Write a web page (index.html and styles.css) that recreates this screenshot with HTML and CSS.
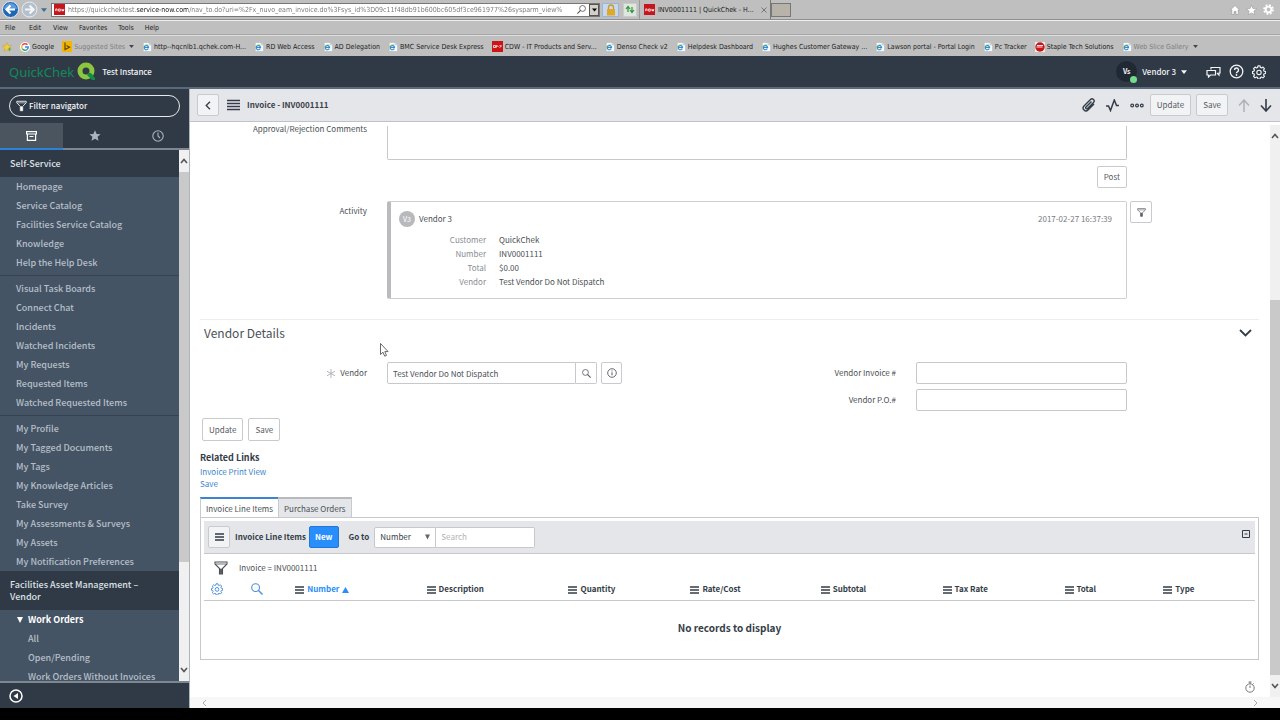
FILE: index.html
```html
<!DOCTYPE html>
<html lang="en">
<head>
<meta charset="utf-8">
<title>INV0001111 | QuickChek</title>
<link rel="stylesheet" href="styles.css">
</head>
<body>
<svg class="defs" aria-hidden="true">
  <symbol id="ie" viewBox="0 0 12 12"><path d="M1.500 .5h7l3 3v8h-10z" fill="#f8fbff" stroke="#a9b3be" stroke-width=".7"/><path d="M8.500 .5v3h3" fill="#dce5ee" stroke="#a9b3be" stroke-width=".6"/><path d="M7.600 7.900A2.600 2.600 0 1 1 7.900 6.500H3" fill="none" stroke="#2f8fd0" stroke-width="1.400"/><path d="M.6 8.500C.3 5.500 4 2.500 7.600 3.200" fill="none" stroke="#d8c83c" stroke-width=".8"/></symbol>
  <symbol id="gear" viewBox="0 0 16 16"><path d="M6.800 1h2.400l.4 1.900 1.300.5 1.600-1 1.700 1.700-1 1.600.5 1.300 1.900.4v2.300l-1.900.4-.5 1.300 1 1.600-1.700 1.700-1.600-1-1.300.5-.4 1.900H6.800l-.4-1.900-1.300-.5-1.600 1-1.700-1.700 1-1.600-.5-1.300L.6 9.700V7.400l1.700-.4.5-1.300-1-1.600 1.700-1.700 1.600 1 1.300-.5z" fill="none" stroke="currentColor" stroke-width="1.300" stroke-linejoin="round"/><circle cx="8" cy="8.500" r="2.500" fill="none" stroke="currentColor" stroke-width="1.300"/></symbol>
  <symbol id="funnel" viewBox="0 0 14 14"><path d="M1 1h12v2L8.500 7.500V13h-3V7.500L1 3z" fill="none" stroke="currentColor" stroke-width="1.100"/><path d="M2 3h10M6.200 8v4.500h1.600V8z" fill="currentColor" stroke="currentColor" stroke-width=".8"/></symbol>
  <symbol id="bars" viewBox="0 0 9 8"><path d="M0 1h9M0 4h9M0 7h9" stroke="currentColor" stroke-width="1.300"/></symbol>
  <symbol id="search" viewBox="0 0 12 12"><circle cx="4.600" cy="4.600" r="3.900" fill="none" stroke="currentColor" stroke-width="1.100"/><path d="M7.300 7.300l4.200 4.200" stroke="currentColor" stroke-width="1.400"/></symbol>
  <symbol id="up" viewBox="0 0 8 6"><path d="M1 5l3-3.500L7 5" fill="none" stroke="currentColor" stroke-width="1.600"/></symbol>
  <symbol id="down" viewBox="0 0 8 6"><path d="M1 1l3 3.500L7 1" fill="none" stroke="currentColor" stroke-width="1.600"/></symbol>
  <symbol id="caret" viewBox="0 0 8 5"><path d="M0 0h8L4 5z" fill="currentColor"/></symbol>
  <symbol id="wedge" viewBox="0 0 6 6"><path d="M0 0h6L3 6z" fill="currentColor"/></symbol>
  <symbol id="now" viewBox="0 0 10 10"><path d="M0 0h10v10H0z" fill="#c4161c"/><path d="M1.500 6.500v-2h1.300v2M4.200 4.500h1.500v2H4.200zM7 4.500l.5 2 .5-1.500.5 1.500.5-2" fill="none" stroke="#fff" stroke-width=".7"/></symbol>
</svg>

<header class="browser">
  <div class="address-row">
    <button class="round" aria-label="Back"><svg width="17" height="17" viewBox="0 0 17 17"><circle cx="8.500" cy="8.500" r="8" fill="#1f66b5" stroke="#e8eef5"/><path d="M2 8a6.500 6 0 0 1 13 0z" fill="#5b9adb"/><path d="M13 8.500H5M8.500 4.500l-4 4 4 4" fill="none" stroke="#fff" stroke-width="2.200"/></svg></button>
    <button class="round" aria-label="Forward"><svg width="17" height="17" viewBox="0 0 17 17"><circle cx="8.500" cy="8.500" r="7.500" fill="#b4bfcc" stroke="#e9eef4"/><path d="M4 8.500h8M8.500 4.500l4 4-4 4" fill="none" stroke="#f4f7fa" stroke-width="2.200"/></svg></button>
    <svg class="history" width="6" height="4"><use href="#caret"/></svg>
    <div class="address">
      <svg width="11" height="11"><use href="#now"/></svg>
      <input class="url" aria-label="Address" value="https://quickchektest.service-now.com/nav_to.do?uri=%2Fx_nuvo_eam_invoice.do%3Fsys_id%3D09c11f48db91b600bc605df3ce961977%26sysparm_view%">
      <svg class="flip" width="9" height="9"><use href="#search"/></svg>
      <button class="drop" aria-label="Show addresses"><svg width="5" height="4"><use href="#caret"/></svg></button>
    </div>
    <button class="chip chip-lock" aria-label="Security report"><svg width="10" height="12" viewBox="0 0 10 12"><path d="M2.500 5V3.500a2.500 2.500 0 0 1 5 0V5" fill="none" stroke="#c89a2c" stroke-width="1.300"/><rect x="1" y="5" width="8" height="6.500" fill="#dfa827"/></svg></button>
    <button class="chip chip-fresh" aria-label="Refresh"><svg width="10" height="9" viewBox="0 0 10 9"><path d="M3 7V2M1 4l2-2.500L5 4M7 2v5M5 5l2 2.500L9 5" fill="none" stroke="#2c9434" stroke-width="1.200"/></svg></button>
    <div class="page-tab"><svg width="11" height="11"><use href="#now"/></svg><span>INV0001111 | QuickChek - H...</span><button class="plain" aria-label="Close tab"><svg width="6" height="6" viewBox="0 0 6 6"><path d="M.5.5l5 5M5.500.5l-5 5" stroke="#777"/></svg></button></div>
    <button class="new-tab" aria-label="New tab"></button>
    <div class="browser-tools">
      <button class="plain" aria-label="Home"><svg width="10" height="10" viewBox="0 0 10 10"><path d="M5 .5L.5 5h1.300v4.500h2.200V6.500h2v3h2.200V5h1.300z" fill="#fff" stroke="#888" stroke-width=".5"/></svg></button>
      <button class="plain" aria-label="Favorites"><svg width="11" height="10" viewBox="0 0 12 11"><path d="M6 .3l1.600 3.600 4 .3-3 2.600.9 3.900L6 8.700l-3.500 2 .9-3.900-3-2.600 4-.3z" fill="#fff" stroke="#888" stroke-width=".5"/></svg></button>
      <button class="plain white" aria-label="Tools"><svg width="11" height="11" viewBox="0 0 12 12"><circle cx="6" cy="6" r="4.800" fill="none" stroke="#fff" stroke-width="2" stroke-dasharray="2 1.770"/><circle cx="6" cy="6" r="3.100" fill="none" stroke="#fff" stroke-width="2"/></svg></button>
    </div>
  </div>
  <nav class="menu-row" aria-label="Browser menu"><button>File</button><button>Edit</button><button>View</button><button>Favorites</button><button>Tools</button><button>Help</button></nav>
  <nav class="bookmarks" aria-label="Bookmarks">
    <svg width="10" height="10" viewBox="0 0 12 11"><path d="M6 .3l1.600 3.600 4 .3-3 2.600.9 3.900L6 8.700l-3.500 2 .9-3.900-3-2.600 4-.3z" fill="#f3cf3b" stroke="#c49a1b" stroke-width=".5"/><path d="M7 8h4M9 6v4" stroke="#48a548"/></svg>
    <a href="#"><svg width="10" height="10" viewBox="0 0 10 10"><circle cx="5" cy="5" r="5" fill="#fff"/><path d="M7.500 2.800A3.300 3.300 0 0 0 2.200 3.300" stroke="#ea4335" stroke-width="1.400" fill="none"/><path d="M2.200 3.300a3.300 3.300 0 0 0 0 3.400" stroke="#fbbc05" stroke-width="1.400" fill="none"/><path d="M2.200 6.700a3.300 3.300 0 0 0 4.900.8" stroke="#34a853" stroke-width="1.400" fill="none"/><path d="M7.100 7.500A3.300 3.300 0 0 0 8.300 5H5" stroke="#4285f4" stroke-width="1.400" fill="none"/></svg>Google</a>
    <a href="#" class="dim"><svg width="10" height="11" viewBox="0 0 10 11"><path d="M0 0h10v11H0z" fill="#f4b400"/><path d="M3 1.500v7l4.500-2.300L4.500 4.500" fill="none" stroke="#5c4708" stroke-width="1.200"/></svg>Suggested Sites <svg class="tiny" width="5" height="3"><use href="#caret"/></svg></a>
    <a href="#"><svg width="10" height="10"><use href="#ie"/></svg>http--hqcnlb1.qchek.com-H...</a>
    <a href="#"><svg width="10" height="10"><use href="#ie"/></svg>RD Web Access</a>
    <a href="#"><svg width="10" height="10"><use href="#ie"/></svg>AD Delegation</a>
    <a href="#"><svg width="10" height="10"><use href="#ie"/></svg>BMC Service Desk Express</a>
    <a href="#"><svg width="11" height="11" viewBox="0 0 11 11"><path d="M0 0h11v11H0z" fill="#cc1417"/><path d="M1.500 4.500h2v2h-2zM4.500 6.500v-2l2 1M7.500 4.500l2 .5-2 1.500" fill="none" stroke="#fff" stroke-width=".8"/></svg>CDW - IT Products and Serv...</a>
    <a href="#"><svg width="10" height="10"><use href="#ie"/></svg>Denso Check v2</a>
    <a href="#"><svg width="10" height="10"><use href="#ie"/></svg>Helpdesk Dashboard</a>
    <a href="#"><svg width="10" height="10"><use href="#ie"/></svg>Hughes Customer Gateway ...</a>
    <a href="#"><svg width="10" height="10"><use href="#ie"/></svg>Lawson portal - Portal Login</a>
    <a href="#"><svg width="10" height="10"><use href="#ie"/></svg>Pc Tracker</a>
    <a href="#"><svg width="10" height="10" viewBox="0 0 10 10"><path d="M0 0h10v10H0z" fill="#f3e9e9"/><circle cx="5" cy="5" r="4.700" fill="#c9151b"/><path d="M2 3.500h6M1.500 5h6" stroke="#fff" stroke-width=".9"/></svg>Staple Tech Solutions</a>
    <a href="#" class="dim"><svg width="10" height="10"><use href="#ie"/></svg>Web Slice Gallery <svg class="tiny" width="5" height="3"><use href="#caret"/></svg></a>
  </nav>
</header>

<header class="banner">
  <span class="brand">QuickChek</span>
  <svg width="19" height="19" viewBox="0 0 19 19"><circle cx="9" cy="9" r="6" fill="none" stroke="#8cc63f" stroke-width="5"/><path d="M11 11h3l4 5v2h-3l-5-5z" fill="#128a4a"/></svg>
  <span class="instance">Test Instance</span>
  <button class="user"><span class="avatar">Vs<i class="presence"></i></span>Vendor 3<svg width="6" height="4"><use href="#caret"/></svg></button>
  <button class="plain tool" aria-label="Conversations"><svg width="15" height="12" viewBox="0 0 15 12"><path d="M5 3.500V1.500h9V7h-1v2l-2-2" fill="none" stroke="currentColor" stroke-width="1.200"/><path d="M1 4.500h8.500V9H4.500l-2 2V9H1z" fill="none" stroke="currentColor" stroke-width="1.200"/></svg></button>
  <button class="plain tool" aria-label="Help"><svg width="15" height="15" viewBox="0 0 15 15"><circle cx="7.500" cy="7.500" r="6.300" fill="none" stroke="currentColor" stroke-width="1.300"/><path d="M5.500 6a2 2 0 1 1 2.900 1.800c-.7.400-.9.700-.9 1.400" fill="none" stroke="currentColor" stroke-width="1.400"/><circle cx="7.500" cy="11" r=".9" fill="currentColor"/></svg></button>
  <button class="plain tool" aria-label="Settings"><svg width="14" height="14"><use href="#gear"/></svg></button>
</header>

<div class="shell">
  <aside class="sidebar">
    <label class="filter"><svg width="11" height="12"><use href="#funnel"/></svg><input aria-label="Filter navigator" placeholder="Filter navigator"></label>
    <div class="nav-tabs">
      <button class="on" aria-label="All applications"><svg width="11" height="10" viewBox="0 0 11 10"><path d="M.6.600h9.800v2.400H.6zM1.400 3v6.300h8.200V3M3.500 5.500h4" fill="none" stroke="currentColor" stroke-width="1.200"/></svg></button>
      <button aria-label="Favorites"><svg width="12" height="11" viewBox="0 0 12 11"><path d="M6 .3l1.600 3.600 4 .3-3 2.600.9 3.900L6 8.700l-3.500 2 .9-3.900-3-2.600 4-.3z" fill="currentColor"/></svg></button>
      <button aria-label="History"><svg width="12" height="12" viewBox="0 0 12 12"><circle cx="6" cy="6" r="5.200" fill="none" stroke="currentColor" stroke-width="1.100"/><path d="M6 2.500V6l2 2" fill="none" stroke="currentColor" stroke-width="1.100"/></svg></button>
    </div>
    <div class="nav-body">
      <nav class="nav-list" aria-label="Applications">
        <h2>Self-Service</h2>
        <ul><li><a href="#">Homepage</a></li><li><a href="#">Service Catalog</a></li><li><a href="#">Facilities Service Catalog</a></li><li><a href="#">Knowledge</a></li><li><a href="#">Help the Help Desk</a></li></ul>
        <ul><li><a href="#">Visual Task Boards</a></li><li><a href="#">Connect Chat</a></li><li><a href="#">Incidents</a></li><li><a href="#">Watched Incidents</a></li><li><a href="#">My Requests</a></li><li><a href="#">Requested Items</a></li><li><a href="#">Watched Requested Items</a></li></ul>
        <ul><li><a href="#">My Profile</a></li><li><a href="#">My Tagged Documents</a></li><li><a href="#">My Tags</a></li><li><a href="#">My Knowledge Articles</a></li><li><a href="#">Take Survey</a></li><li><a href="#">My Assessments &amp; Surveys</a></li><li><a href="#">My Assets</a></li><li><a href="#">My Notification Preferences</a></li></ul>
        <h2>Facilities Asset Management – Vendor</h2>
        <button class="nav-group"><svg width="6" height="6"><use href="#wedge"/></svg>Work Orders</button>
        <ul class="sub"><li><a href="#">All</a></li><li><a href="#">Open/Pending</a></li><li><a href="#">Work Orders Without Invoices</a></li></ul>
      </nav>
      <div class="vbar side-bar"><button aria-label="Scroll up"><svg width="8" height="6"><use href="#up"/></svg></button><i class="thumb"></i><i class="rest"></i><button aria-label="Scroll down"><svg width="8" height="6"><use href="#down"/></svg></button></div>
    </div>
    <div class="side-foot"><button class="plain" aria-label="Collapse navigator"><svg width="14" height="14" viewBox="0 0 14 14"><circle cx="7" cy="7" r="6" fill="none" stroke="#fff" stroke-width="1.500"/><path d="M9 4v6L4.500 7z" fill="#fff"/></svg></button></div>
  </aside>

  <main class="main">
    <div class="form-bar">
      <button class="btn icon" aria-label="Back"><svg width="6" height="9" viewBox="0 0 6 9"><path d="M5 .7L1.200 4.500 5 8.300" fill="none" stroke="currentColor" stroke-width="1.300"/></svg></button>
      <button class="plain dark" aria-label="Form menu"><svg width="13" height="12" viewBox="0 0 13 12"><path d="M0 1.500h13M0 4.500h13M0 7.500h13M0 10.500h13" stroke="currentColor" stroke-width="1.500"/></svg></button>
      <h1>Invoice - INV0001111</h1>
      <div class="form-tools">
        <button class="plain dark" aria-label="Attachments"><svg width="14" height="14" viewBox="0 0 14 14"><path d="M9.500 3.500L4 9a1 1 0 0 0 1.500 1.500l6-6a2 2 0 0 0-3-3L2 8a2.800 2.800 0 0 0 4 4l6-6" fill="none" stroke="currentColor" stroke-width="1.400"/></svg></button>
        <button class="plain dark" aria-label="Activity"><svg width="14" height="13" viewBox="0 0 14 13"><path d="M0 7h2.500l2 4.500L8.300 1l2.200 5.500H13" fill="none" stroke="currentColor" stroke-width="1.500"/></svg></button>
        <button class="plain dark" aria-label="More"><svg width="14" height="5" viewBox="0 0 14 5"><g fill="none" stroke="currentColor" stroke-width="1.200"><circle cx="2.200" cy="2.500" r="1.400"/><circle cx="7" cy="2.500" r="1.400"/><circle cx="11.800" cy="2.500" r="1.400"/></g></svg></button>
        <div class="pair"><button class="btn">Update</button><button class="btn">Save</button></div>
        <button class="plain faint" aria-label="Previous record"><svg width="12" height="13" viewBox="0 0 12 13"><path d="M6 13V1M1 6.500L6 1l5 5.500" fill="none" stroke="currentColor" stroke-width="1.500"/></svg></button>
        <button class="plain dark" aria-label="Next record"><svg width="12" height="13" viewBox="0 0 12 13"><path d="M6 0v12M1 6.500L6 12l5-5.500" fill="none" stroke="currentColor" stroke-width="1.600"/></svg></button>
      </div>
    </div>
    <div class="view">
      <div class="content">
        <div class="row comments"><label for="comments">Approval/Rejection Comments</label><textarea id="comments"></textarea></div>
        <div class="row post"><button class="btn">Post</button></div>
        <section class="row activity">
          <span class="caption">Activity</span>
          <article class="card">
            <header><span class="badge">V3</span><span>Vendor 3</span><time>2017-02-27 16:37:39</time></header>
            <dl><dt>Customer</dt><dd>QuickChek</dd><dt>Number</dt><dd>INV0001111</dd><dt>Total</dt><dd>$0.00</dd><dt>Vendor</dt><dd>Test Vendor Do Not Dispatch</dd></dl>
          </article>
          <button class="btn icon filter-btn" aria-label="Filter activity"><svg width="9" height="9"><use href="#funnel"/></svg></button>
        </section>
        <div class="section-head"><h2>Vendor Details</h2><button class="plain dark" aria-label="Collapse section"><svg width="13" height="8" viewBox="0 0 13 8"><path d="M1 1l5.500 5.500L12 1" fill="none" stroke="currentColor" stroke-width="1.800"/></svg></button></div>
        <div class="fields">
          <label for="vendor"><svg width="8" height="9" viewBox="0 0 8 9"><path d="M4 0v9M0 2.200l8 4.600M8 2.200L0 6.800" stroke="#aaadb2" stroke-width=".9"/></svg>Vendor</label>
          <div class="lookup"><input id="vendor" value="Test Vendor Do Not Dispatch"><button class="btn icon joined" aria-label="Look up vendor"><svg width="9" height="9"><use href="#search"/></svg></button><button class="btn icon" aria-label="Vendor info"><svg width="10" height="10" viewBox="0 0 10 10"><circle cx="5" cy="5" r="4.300" fill="none" stroke="currentColor" stroke-width=".9"/><path d="M5 4.300v3M5 2.400v1" stroke="currentColor"/></svg></button></div>
          <label for="vinv">Vendor Invoice #</label><input id="vinv">
          <label class="third" for="vpo">Vendor P.O.#</label><input id="vpo">
        </div>
        <div class="actions"><button class="btn">Update</button><button class="btn">Save</button></div>
        <section class="links"><h3>Related Links</h3><a href="#">Invoice Print View</a><a href="#">Save</a></section>
        <div class="tabs" role="tablist"><button role="tab" aria-selected="true">Invoice Line Items</button><button role="tab" aria-selected="false">Purchase Orders</button></div>
        <section class="panel">
          <div class="list-bar">
            <button class="btn icon" aria-label="List menu"><svg width="9" height="8"><use href="#bars"/></svg></button>
            <h3>Invoice Line Items</h3>
            <button class="btn primary">New</button>
            <label for="goto">Go to</label>
            <div class="goto"><span class="select"><select id="goto"><option>Number</option></select><svg width="5" height="6"><use href="#wedge"/></svg></span><input aria-label="Search" placeholder="Search"></div>
            <button class="plain collapse" aria-label="Collapse list"><svg width="8" height="8" viewBox="0 0 8 8"><path d="M.5.500h7v7h-7zM2.500 4h3" fill="none" stroke="currentColor"/></svg></button>
          </div>
          <div class="crumb"><svg width="14" height="14"><use href="#funnel"/></svg><a href="#">Invoice = INV0001111</a></div>
          <table>
            <colgroup><col class="c-gear"><col class="c-find"><col class="c-number"><col class="c-desc"><col class="c-std"><col class="c-rate"><col class="c-std"><col class="c-std"><col class="c-total"><col></colgroup>
            <thead><tr>
              <th class="tool-cell"><button class="plain blue" aria-label="Personalize list"><svg width="12" height="12"><use href="#gear"/></svg></button></th>
              <th class="tool-cell"><button class="plain blue" aria-label="Search columns"><svg width="12" height="12"><use href="#search"/></svg></button></th>
              <th><svg width="9" height="8"><use href="#bars"/></svg><a class="sorted" href="#">Number</a> <svg class="sort" width="7" height="6" viewBox="0 0 7 6"><path d="M3.500 0L7 6H0z" fill="#278efc"/></svg></th>
              <th><svg width="9" height="8"><use href="#bars"/></svg>Description</th>
              <th><svg width="9" height="8"><use href="#bars"/></svg>Quantity</th>
              <th><svg width="9" height="8"><use href="#bars"/></svg>Rate/Cost</th>
              <th><svg width="9" height="8"><use href="#bars"/></svg>Subtotal</th>
              <th><svg width="9" height="8"><use href="#bars"/></svg>Tax Rate</th>
              <th><svg width="9" height="8"><use href="#bars"/></svg>Total</th>
              <th><svg width="9" height="8"><use href="#bars"/></svg>Type</th>
            </tr></thead>
            <tbody><tr><td colspan="10">No records to display</td></tr></tbody>
          </table>
        </section>
        <div class="timer"><button class="plain" aria-label="Response time"><svg width="10" height="12" viewBox="0 0 10 12"><circle cx="5" cy="7" r="4.200" fill="none" stroke="currentColor"/><path d="M5 4.500V7M3.500 1h3M5 1v2M8.500 2.500l-1 1" stroke="currentColor"/></svg></button></div>
      </div>
      <div class="vbar main-bar"><button aria-label="Scroll up"><svg width="8" height="6"><use href="#up"/></svg></button><i class="rest"></i><i class="thumb"></i><button aria-label="Scroll down"><svg width="8" height="6"><use href="#down"/></svg></button></div>
    </div>
    <div class="hbar"><button class="plain" aria-label="Scroll left"><svg width="5" height="8" viewBox="0 0 5 8"><path d="M4 1L1 4l3 3" fill="none" stroke="#aaa"/></svg></button><button class="plain" aria-label="Scroll right"><svg width="5" height="8" viewBox="0 0 5 8"><path d="M1 1l3 3-3 3" fill="none" stroke="#aaa"/></svg></button></div>
  </main>
</div>
<svg class="pointer" width="9" height="14" viewBox="0 0 9 14" aria-hidden="true"><path d="M.5.500v11l2.500-2.300 1.700 4 1.800-.8-1.700-3.800h3.300z" fill="#fff" stroke="#444" stroke-width=".8"/></svg>
</body>
</html>
```
FILE: styles.css
```css
* { box-sizing: border-box; }
body {
  margin: 0;
  height: 100vh;
  padding-bottom: 12px;
  display: flex;
  flex-direction: column;
  overflow: hidden;
  background: #000;
  color: #4b5054;
  font: 8px/12px "Noto Sans CJK SC", "Noto Sans", sans-serif;
}
svg { display: block; flex: none; }
.defs { position: absolute; width: 0; height: 0; }
button, input, select, textarea { font: inherit; color: inherit; margin: 0; }
input, textarea { min-width: 0; }
button { padding: 0; border: 0; background: none; }
h1, h2, h3, ul, dl, dd { margin: 0; padding: 0; font-size: inherit; }
ul { list-style: none; }
a { color: inherit; text-decoration: none; }
.plain { display: flex; align-items: center; justify-content: center; }
.dark { color: #343d47; }
.faint { color: #adb1b7; }
.blue { color: #4a90dc; }
.white { color: #fff; }

/* Browser chrome */
.browser { background: #bfbfbf; color: #222; font-family: "DejaVu Sans Condensed", "DejaVu Sans", sans-serif; font-size: 7px; flex: none; }
.address-row { height: 20px; display: flex; align-items: center; padding: 0 6px 0 2px; border-bottom: 1px solid #8f8f8f; }
.round { margin-right: 2px; }
.history { color: #3c6e96; margin: 0 4px 0 1px; }
.address { width: 549px; height: 14px; display: flex; align-items: center; gap: 3px; padding-left: 2px; background: #fff; border: 1px solid #777; margin-right: 2px; }
.url {
  flex: 1;
  border: 0;
  padding: 0;
  outline: 0;
  color: transparent;
  background: linear-gradient(90deg, #757575 68px, #111 68px 120px, #757575 120px);
  -webkit-background-clip: text;
  background-clip: text;
}
.flip { transform: scaleX(-1); color: #555; }
.address .drop { width: 10px; height: 12px; display: grid; place-items: center; background: #d4d0c8; border: 1px solid #555; color: #000; }
.chip { width: 17px; height: 14px; display: grid; place-items: center; border: 1px solid #9bb4d4; background: #c6d8ee; margin-right: 4px; }
.chip-fresh { width: 14px; background: #dfe6df; border-color: #c8cdc8; margin-right: 2px; }
.page-tab { width: 132px; height: 19px; display: flex; align-items: center; gap: 3px; padding: 0 3px 0 4px; border-left: 1px solid #999; border-right: 1px solid #777; }
.page-tab span { flex: 1; white-space: nowrap; }
.new-tab { width: 20px; height: 14px; background: #b8b3a8; border: 1px solid #777; }
.browser-tools { margin-left: auto; display: flex; gap: 6px; }
.menu-row { height: 15px; display: flex; gap: 11px; align-items: center; padding: 1px 0 0 5px; border-top: 1px solid #eee; border-bottom: 1px solid #a8a8a8; }
.menu-row button { min-width: 13px; text-align: left; }
.bookmarks { height: 21px; display: flex; gap: 8px; align-items: center; padding: 1px 0 0 2px; border-top: 1px solid #ddd; white-space: nowrap; }
.bookmarks a { display: flex; align-items: center; gap: 2px; }
.bookmarks .dim { color: #808080; }
.tiny { color: #444; margin-left: 2px; }

/* Banner */
.banner { height: 33px; flex: none; display: flex; align-items: center; padding: 0 14px 0 9px; background: #303a46; border-bottom: 2px solid #596a7b; color: #f2f4f6; }
.brand { color: #128a5b; font: 13px/20px "Noto Sans", sans-serif; margin-right: 3px; }
.instance { margin-left: 6px; font-weight: 500; }
.user { margin-left: auto; display: flex; align-items: center; gap: 5px; font-weight: 500; margin-right: 11px; }
.avatar { position: relative; width: 21px; height: 21px; border-radius: 50%; background: #202833; font-size: 7px; line-height: 20px; font-weight: 700; }
.presence { position: absolute; right: 0; bottom: -1px; width: 7px; height: 7px; border-radius: 50%; background: #72dc8c; }
.tool { margin-left: 8px; }

.shell { flex: 1; min-height: 0; display: flex; }

/* Navigator */
.sidebar { width: 189px; flex: none; display: flex; flex-direction: column; background: #303a46; }
.filter { height: 22px; margin: 6px 9px 6px 9px; display: flex; align-items: center; gap: 2px; padding: 0 6px; border: 1px solid #e6e9ec; border-radius: 11px; color: #fff; flex: none; }
.filter input { flex: 1; border: 0; padding: 0; outline: 0; background: none; font-weight: 500; }
.filter input::placeholder { color: #f4f6f8; }
.nav-tabs { height: 27px; flex: none; display: grid; grid-template-columns: repeat(3, 1fr); }
.nav-tabs button { display: grid; place-items: center; border-bottom: 2px solid #81878e; color: #aab4be; }
.nav-tabs .on { background: #4b5560; border-color: #2f80d8; color: #fff; }
.nav-body { flex: 1; min-height: 0; display: flex; }
.nav-list { flex: 1; overflow: hidden; background: #455464; color: #b5bfc9; font-size: 9px; font-weight: 500; }
.nav-list h2 { padding: 8px 9px 7px 10px; background: #303a46; color: #dde2e7; font-weight: 500; line-height: 12px; }
.nav-list ul + ul { border-top: 1px solid #36424f; margin-top: 3px; padding-top: 3px; }
.nav-list a { display: block; padding-left: 16px; line-height: 19px; white-space: nowrap; }
.nav-list .sub a { padding-left: 28px; }
.nav-group { display: flex; align-items: center; gap: 5px; padding-left: 17px; height: 19px; color: #fff; font-weight: 700; }
.side-foot { height: 27px; flex: none; display: flex; padding-left: 9px; border-top: 2px solid #7d8790; }
.vbar { flex: none; width: 10px; display: flex; flex-direction: column; background: #f0f0f0; color: #555; }
.vbar button { height: 22px; display: grid; place-items: center; flex: none; }
.vbar .thumb { background: #c9c9c9; }
.side-bar .thumb { flex: 390; }
.side-bar .rest { flex: 97; }
.main-bar { margin-top: 3px; }
.main-bar .thumb { flex: 375; }
.main-bar .rest { flex: 153; }

/* Form */
.main { flex: 1; min-width: 0; display: flex; flex-direction: column; background: #fff; border-left: 1px solid #aeb4ba; }
.form-bar { height: 33px; flex: none; display: flex; align-items: center; padding: 0 8px 0 7px; background: #e4e6ea; border-bottom: 1px solid #bfc2ca; }
.form-bar h1 { margin-left: 7px; color: #3a4149; font-weight: 700; }
.form-bar > .plain { margin-left: 8px; }
.form-tools { margin-left: auto; display: flex; align-items: center; gap: 10px; }
.pair { display: flex; gap: 5px; margin-left: -4px; }
.btn { height: 22px; padding: 0 6px; border: 1px solid #c8cacd; border-radius: 2px; background: #fff; color: #555a5f; }
.btn.icon { width: 22px; padding: 0; display: grid; place-items: center; flex: none; }
.form-bar .btn { background: #f2f3f5; }
.form-bar > .btn { color: #343d47; }
.view { flex: 1; min-height: 0; display: flex; }
.content { flex: 1; min-width: 0; overflow: hidden; padding: 0 11px 0 10px; }
.content input, .content select, .content textarea { border: 1px solid #c6c8cc; border-radius: 2px; background: #fff; outline: 0; padding: 0 5px; }
.row { display: grid; grid-template-columns: 167px minmax(0, 1fr) 112px; column-gap: 20px; }
.row > label, .caption { text-align: right; }
.row.comments textarea { height: 34px; margin-top: 4px; border-top: 0; border-radius: 0 0 2px 2px; resize: none; }
.row.post { padding-top: 6px; }
.row.post .btn { grid-column: 2; justify-self: end; }
.row.activity { margin-top: 13px; }
.row.comments > label { padding-top: 1px; }
.caption { padding-top: 4px; }
.row.activity .filter-btn { margin-left: -17px; }
.card { height: 98px; padding: 9px 14px 0 8px; border: 1px solid #cdcfd2; border-left: 4px solid #b9bbbd; border-radius: 2px; }
.card header { display: flex; align-items: center; gap: 4px; }
.badge { width: 16px; height: 16px; border-radius: 50%; background: #b7b9bc; color: #fff; text-align: center; line-height: 16px; font-size: 7px; }
.card time { margin-left: auto; color: #777c81; }
.card dl { display: grid; grid-template-columns: 87px 1fr; column-gap: 13px; margin-top: 6px; line-height: 14px; }
.card dt { text-align: right; color: #888d92; }
.section-head { margin-top: 20px; padding: 3px 7px 1px 4px; border-top: 1px solid #eceded; display: flex; align-items: center; justify-content: space-between; }
.section-head h2 { font-size: 12px; line-height: 20px; font-weight: 400; }
.fields { display: grid; grid-template-columns: 167px 235px minmax(0, 1fr) 211px 112px; column-gap: 20px; row-gap: 5px; margin-top: 18px; align-items: center; }
.fields label { display: flex; justify-content: flex-end; align-items: center; gap: 5px; }
.fields input { height: 22px; }
.fields .third { grid-column: 3; }
.lookup { display: flex; }
.lookup input { flex: 1; border-radius: 2px 0 0 2px; }
.lookup .icon { width: 21px; }
.lookup .joined { border-left: 0; margin-right: 4px; border-radius: 0 2px 2px 0; }
.actions { display: flex; gap: 5px; padding: 7px 0 0 2px; }
.actions .btn { height: 23px; }
.links { margin-top: 9px; }
.links h3 { font-size: 9px; line-height: 16px; color: #343d47; }
.links a { display: block; width: max-content; color: #3c84cc; }
.tabs { display: flex; margin-top: 7px; }
.tabs button { height: 20px; padding: 2px 5px 0; border: 1px solid #c8cacd; border-top: 2px solid #b7b9be; border-bottom: 0; background: #e4e6ea; }
.tabs [aria-selected="true"] { background: #fff; border-top-color: #3d83cf; border-right: 0; }
.panel { border: 1px solid #c6c8cc; padding: 3px 3px 0; height: 143px; }
.list-bar { height: 33px; display: flex; align-items: center; padding: 0 5px 0 4px; background: #e4e6ea; border-bottom: 1px solid #c6c8cc; color: #343d47; font-weight: 700; }
.list-bar h3 { margin: 0 3px 0 5px; }
.list-bar .btn:first-child { background: #f2f3f5; color: #343d47; }
.list-bar .primary { padding: 0 5px; background: #278efc; border-color: #2277d4; color: #fff; }
.list-bar label { margin: 0 5px 0 10px; }
.goto { display: flex; height: 21px; font-weight: 400; }
.goto .select { position: relative; width: 62px; }
.goto select { appearance: none; width: 100%; height: 100%; border-radius: 2px 0 0 2px; padding: 0 5px; }
.goto .select svg { position: absolute; right: 6px; top: 7px; color: #666; }
.goto input { width: 99px; border-left: 0; border-radius: 0 2px 2px 0; padding: 0 5px; }
.goto input::placeholder { color: #b0b2b5; }
.collapse { margin: 0 0 7px auto; }
.crumb { display: flex; align-items: center; gap: 11px; height: 25px; padding: 2px 0 0 10px; }
table { width: 100%; border-collapse: collapse; table-layout: fixed; }
th { height: 21px; padding: 0 0 0 4px; text-align: left; white-space: nowrap; color: #343d47; border-bottom: 1px solid #c6c8cc; }
th svg { display: inline-block; vertical-align: middle; margin-right: 3px; }
th .plain svg { margin: 0; }
th .sort { margin-left: 1px; }
.sorted { color: #278efc; }
.tool-cell { padding-left: 7px; }
.c-gear { width: 3.8%; }
.c-find { width: 4.5%; }
.c-number { width: 12.5%; }
.c-desc { width: 13.5%; }
.c-std { width: 11.6%; }
.c-rate { width: 12.4%; }
.c-total { width: 9.4%; }
td { height: 55px; padding: 0; text-align: center; font-size: 10px; font-weight: 700; color: #343d47; }
.timer { display: flex; justify-content: flex-end; padding: 21px 4px 0 0; color: #777; }
.hbar { height: 11px; flex: none; display: flex; justify-content: space-between; align-items: center; padding: 0 22px 0 12px; background: #f7f7f7; }
.pointer { position: absolute; left: 380px; top: 343px; }
```
